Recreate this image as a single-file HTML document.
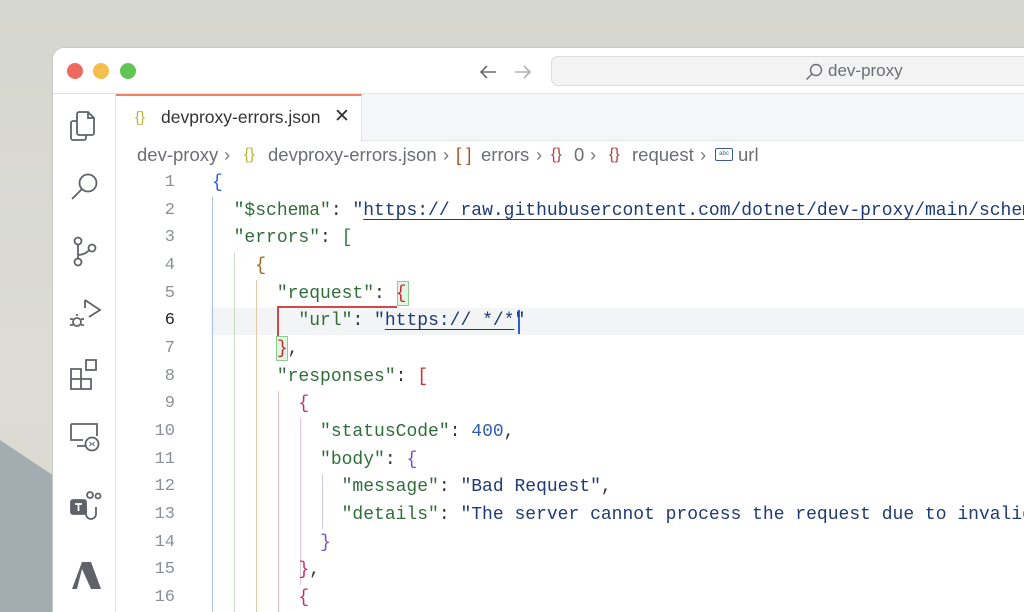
<!DOCTYPE html>
<html><head><meta charset="utf-8"><style>
*{margin:0;padding:0;box-sizing:border-box}
html,body{width:1024px;height:612px;overflow:hidden}
body{position:relative;background:linear-gradient(180deg,#d5d6cf 0%,#dcdcd4 60%,#d9d9d0 100%);font-family:"Liberation Sans",sans-serif}
.bg2{position:absolute;left:0;top:0;width:60px;height:612px;background:#a3adb1;clip-path:polygon(0 440px,60px 480px,60px 612px,0 612px)}
.win{position:absolute;left:52px;top:47px;width:1000px;height:580px;background:#fff;border-radius:12px;overflow:hidden;border:1px solid #c9cac6}
.title{position:absolute;left:0;top:0;right:0;height:46px;background:#fff;border-bottom:1px solid #e3e4e7}
.dot{position:absolute;top:15px;width:16px;height:16px;border-radius:50%}
.search{position:absolute;left:498px;top:8px;width:520px;height:30px;border:1px solid #dcdde0;border-radius:7px;background:#f3f3f4;color:#6b6e73;font-size:17px}
.act{position:absolute;left:0;top:46px;width:63px;bottom:0;background:#fff;border-right:1px solid #e3e4e7}
.tabs{position:absolute;left:63px;top:46px;right:0;height:47px;background:#f5f6f8;border-bottom:1px solid #e3e4e7}
.tab{position:absolute;left:0;top:0;width:246px;height:48px;background:#fff;border-top:2px solid #f08060;border-right:1px solid #e3e4e7}
.cb{position:absolute;top:144px;font-size:18.5px;color:#6b6e73;white-space:nowrap;line-height:22px}
.code{position:absolute;left:0;top:0;font-family:"Liberation Mono",monospace;font-size:18px}
.ln{position:absolute;width:125px;text-align:right;color:#8b9096;font-family:"Liberation Mono",monospace;font-size:17px}
.l{position:absolute;left:160px;white-space:pre;color:#333;height:27px;line-height:27px}
.k{color:#2f6e3b}.s{color:#1e3a78}.n{color:#2d5fb8}.u{color:#1e3a78;text-decoration:underline;text-underline-offset:4px}
.g{position:absolute;width:1px}
</style></head><body>
<div class="bg2"></div>
<div class="win">
 <div class="title">
  <div class="dot" style="left:14px;background:#ec6a5e"></div>
  <div class="dot" style="left:40px;background:#f4bf4f"></div>
  <div class="dot" style="left:67px;background:#61c554"></div>
  <svg style="position:absolute;left:426px;top:14px" width="60" height="20" viewBox="0 0 60 20" fill="none" stroke-width="1.6"><path d="M17 10H2M8 4L2 10l6 6" stroke="#6b6e73"/><path d="M36 10h15M45 4l6 6-6 6" stroke="#b0b3b8"/></svg>
  <div class="search"><svg style="position:absolute;left:253px;top:6px" width="18" height="18" viewBox="0 0 18 18" fill="none" stroke="#6b6e73" stroke-width="1.4"><circle cx="11" cy="7" r="5.5"/><path d="M7 11l-5.5 5.5"/></svg><span style="position:absolute;left:276px;top:4px">dev-proxy</span></div>
 </div>
 <div class="act">
  <svg width="63" height="520" viewBox="0 0 63 520" fill="none" stroke="#5f6368" stroke-width="1.8">
   <path d="M26 18h9l6 6v15a2 2 0 0 1-2 2H26a2 2 0 0 1-2-2V20a2 2 0 0 1 2-2z"/><path d="M35 18v6h6"/><path d="M24 27h-4a2 2 0 0 0-2 2v15a2 2 0 0 0 2 2h11a2 2 0 0 0 2-2v-3"/>
   <circle cx="35" cy="89" r="8.5"/><path d="M29 95l-10 10"/>
   <circle cx="25" cy="147" r="3.5"/><circle cx="39" cy="154" r="3.5"/><circle cx="25" cy="168" r="3.5"/><path d="M25 151v13M36 156c-2 3-7 5-11 5"/>
   <path d="M32 206v8M32 206l15 10-11 7"/><circle cx="24" cy="228" r="4"/><path d="M17 225h3M17 231h3M28 225h3M28 231h3M24 222v-2"/>
   <path d="M18 275h10v10H18zM18 285h10v10H18zM28 285h10v10H28zM33 266h10v10H33z"/>
   <path d="M18 330h26v12M18 330v16h12M24 352h8"/><circle cx="39" cy="350" r="6.5"/><path d="M36.5 348l2 2-2 2M41.5 348l-2 2 2 2" stroke-width="1"/>
   <rect x="18" y="406" width="15" height="14" rx="2" fill="#5f6368"/><path d="M22 410h7M25.5 410v7" stroke="#fff"/><circle cx="37" cy="401" r="3"/><circle cx="45" cy="402" r="2.5"/><path d="M33 413v7a5 5 0 0 0 10 0v-7"/>
   <path d="M19 495l10-27h9l10 27H38l-9-20-5 20z" fill="#5f6368" stroke="none"/>
  </svg>
 </div>
 <div class="tabs"><div class="tab">
  <span style="position:absolute;left:19px;top:13px;color:#b5b33a;font-size:15px">{}</span>
  <span style="position:absolute;left:45px;top:11px;color:#333;font-size:17.5px">devproxy-errors.json</span>
  <span style="position:absolute;left:218px;top:9px;color:#333;font-size:19px">✕</span>
 </div></div>
</div>
<div class="cb" style="left:137px">dev-proxy</div>
<div class="cb" style="left:224px;color:#777">›</div>
<div class="cb" style="left:244px;color:#b5b33a;font-size:16px">{}</div>
<div class="cb" style="left:268px">devproxy-errors.json</div>
<div class="cb" style="left:443px;color:#777">›</div>
<div class="cb" style="left:456px;color:#b2532a">[ ]</div>
<div class="cb" style="left:481px">errors</div>
<div class="cb" style="left:536px;color:#777">›</div>
<div class="cb" style="left:551px;color:#b73a3a;font-size:16px">{}</div>
<div class="cb" style="left:574px">0</div>
<div class="cb" style="left:590px;color:#777">›</div>
<div class="cb" style="left:609px;color:#b73a3a;font-size:16px">{}</div>
<div class="cb" style="left:632px">request</div>
<div class="cb" style="left:700px;color:#777">›</div>
<div style="position:absolute;left:715px;top:148px;width:18px;height:13px;border:1.5px solid #3a5a9a;border-radius:2px;font-size:6px;line-height:10px;text-align:center;color:#3a5a9a">abc</div>
<div class="cb" style="left:738px">url</div>
<div style="position:absolute;left:211px;top:308px;width:813px;height:27px;background:#f3f4f6"></div>
<div class="code">
 <div class="g" style="left:212px;top:197px;height:415px;background:#a9c2f0"></div>
 <div class="g" style="left:234px;top:252px;height:360px;background:#c8dcc8"></div>
 <div class="g" style="left:256px;top:280px;height:332px;background:#e3c9a8"></div>
 <div class="g" style="left:278px;top:391px;height:221px;background:#eec3c3"></div>
 <div class="g" style="left:300px;top:418px;height:167px;background:#e8c4d8"></div>
 <div class="g" style="left:322px;top:474px;height:55px;background:#d0c8ee"></div>
 <div style="position:absolute;left:277px;top:306px;width:120px;height:2px;background:#d04848"></div>
 <div style="position:absolute;left:277px;top:306px;width:2px;height:30px;background:#d04848"></div>
 <div style="position:absolute;left:397px;top:281px;width:12px;height:25px;border:1px solid #8ccf8c;background:#e4f4e4"></div>
 <div style="position:absolute;left:276px;top:336px;width:12px;height:25px;border:1px solid #8ccf8c;background:#e4f4e4"></div>
 <div style="position:absolute;left:518px;top:310px;width:2px;height:24px;background:#2a5fd0"></div>
 <div class="ln" style="top:173px;left:50px">1</div>
 <div class="ln" style="top:201px;left:50px">2</div>
 <div class="ln" style="top:228px;left:50px">3</div>
 <div class="ln" style="top:256px;left:50px">4</div>
 <div class="ln" style="top:284px;left:50px">5</div>
 <div class="ln" style="top:311px;left:50px;color:#222">6</div>
 <div class="ln" style="top:339px;left:50px">7</div>
 <div class="ln" style="top:367px;left:50px">8</div>
 <div class="ln" style="top:394px;left:50px">9</div>
 <div class="ln" style="top:422px;left:50px">10</div>
 <div class="ln" style="top:450px;left:50px">11</div>
 <div class="ln" style="top:477px;left:50px">12</div>
 <div class="ln" style="top:505px;left:50px">13</div>
 <div class="ln" style="top:533px;left:50px">14</div>
 <div class="ln" style="top:560px;left:50px">15</div>
 <div class="ln" style="top:588px;left:50px">16</div>
 <div class="l" style="top:170px;left:212px"><span style="color:#2d5fd0">{</span></div>
 <div class="l" style="top:198px;left:212px">  <span class="k">"$schema"</span>: <span class="s">"</span><span class="u">https:// raw.githubusercontent.com/dotnet/dev-proxy/main/schemas</span></div>
 <div class="l" style="top:225px;left:212px">  <span class="k">"errors"</span>: <span style="color:#2f7f3f">[</span></div>
 <div class="l" style="top:253px;left:212px">    <span style="color:#9a6a1a">{</span></div>
 <div class="l" style="top:281px;left:212px">      <span class="k">"request"</span>: <span style="color:#c03030">{</span></div>
 <div class="l" style="top:308px;left:212px">        <span class="k">"url"</span>: <span class="s">"</span><span class="u">https:// */*</span><span class="s">"</span></div>
 <div class="l" style="top:336px;left:212px">      <span style="color:#c03030">}</span>,</div>
 <div class="l" style="top:364px;left:212px">      <span class="k">"responses"</span>: <span style="color:#d03030">[</span></div>
 <div class="l" style="top:391px;left:212px">        <span style="color:#c03070">{</span></div>
 <div class="l" style="top:419px;left:212px">          <span class="k">"statusCode"</span>: <span class="n">400</span>,</div>
 <div class="l" style="top:447px;left:212px">          <span class="k">"body"</span>: <span style="color:#7a4ad0">{</span></div>
 <div class="l" style="top:474px;left:212px">            <span class="k">"message"</span>: <span class="s">"Bad Request"</span>,</div>
 <div class="l" style="top:502px;left:212px">            <span class="k">"details"</span>: <span class="s">"The server cannot process the request due to invalid</span></div>
 <div class="l" style="top:530px;left:212px">          <span style="color:#7a4ad0">}</span></div>
 <div class="l" style="top:557px;left:212px">        <span style="color:#c03070">}</span>,</div>
 <div class="l" style="top:585px;left:212px">        <span style="color:#c03070">{</span></div>
</div>
</body></html>
